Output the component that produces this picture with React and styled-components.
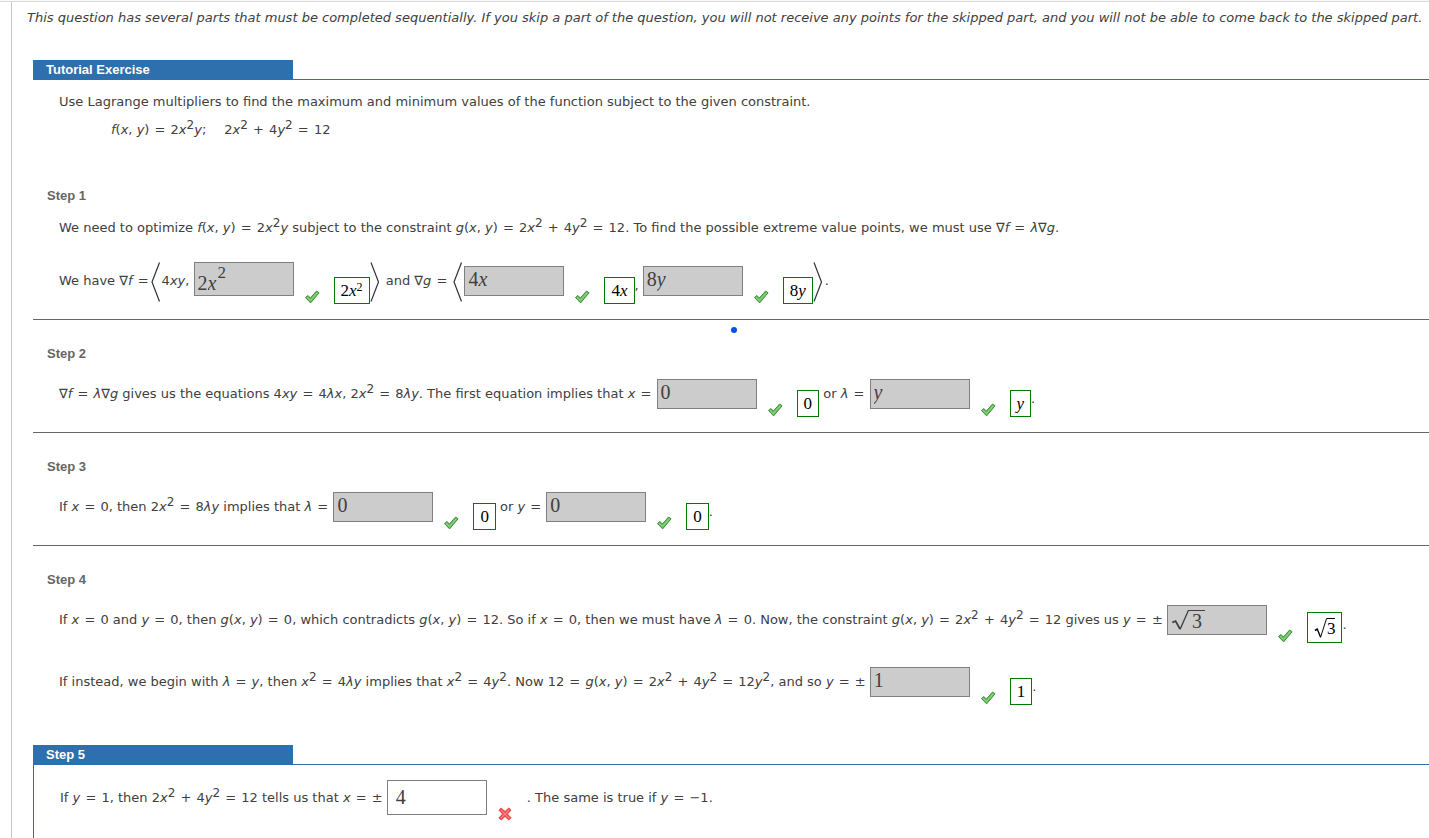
import React from "react";
import styled, { createGlobalStyle } from "styled-components";

const GlobalStyle = createGlobalStyle`
  * {
    box-sizing: border-box;
  }

  body {
    margin: 0;
    background: #fff;
    color: #404040;
    font-family: Verdana, "DejaVu Sans", sans-serif;
    font-size: 13px;
    line-height: 20px;
  }
`;

const Page = styled.main`
  min-height: 100vh;
  padding-top: 1px;
  background: #f8f8f8;
  overflow: hidden;
`;

const Question = styled.div`
  min-height: 100vh;
  border-top: 1px solid #dcdcdc;
  background: #fff;
  display: flex;
`;

const Gutter = styled.div`
  flex: none;
  width: 12px;
  border-right: 1px solid #c8c8c8;
`;

const Content = styled.div`
  flex: 1;
  min-width: 0;
  padding: 6px 0 0 21px;
  white-space: nowrap;
`;

const Notice = styled.p`
  margin: 0 0 32px -6px;
  font-style: italic;
`;

const Banner = styled.h2`
  margin: 0;
  border-bottom: 1px solid #2e6fad;
  font-size: 13px;
  font-family: Arial, "Liberation Sans", sans-serif;
  line-height: 19px;
  color: #fff;

  span {
    display: block;
    width: 260px;
    padding-left: 13px;
    background: #2e6fad;
  }
`;

const Intro = styled.div`
  padding: 12px 0 46px 26px;
`;

const Text = styled.p`
  margin: 0;
`;

const Formula = styled.p`
  margin: 8px 0 0 52px;

  span + span {
    margin-left: 18px;
  }
`;

const StepBox = styled.section`
  position: relative;
  padding: 0 0 ${(props) => (props.$last ? "0" : "15px")} 26px;
  border-bottom: ${(props) => (props.$last ? "none" : "1px solid #666")};
  margin-bottom: 24px;
`;

const StepTitle = styled.h3`
  margin: 0 0 ${(props) => (props.$tight ? "12px" : "15px")} -12px;
  font-family: Arial, "Liberation Sans", sans-serif;
  font-size: 13px;
  line-height: 20px;
  color: #666;
`;

const Row = styled.div`
  display: flex;
  align-items: flex-end;
  margin-top: ${(props) => (props.$spaced ? "24px" : "0")};
`;

const Words = styled.span`
  line-height: 30px;
  margin-bottom: 8px;
  white-space: pre;
`;

const Sup = styled.sup`
  font-size: 12px;
  line-height: 0;
  vertical-align: 5px;
`;

const Operator = styled.b`
  padding: 0 1px;
  font-weight: normal;
`;

const Field = styled.span`
  flex: none;
  display: flex;
  align-items: ${(props) => (props.$tall ? "flex-end" : "flex-start")};
  width: 100px;
  height: ${(props) => (props.$tall ? 34 : 30)}px;
  margin-bottom: 8px;
  padding-left: 3px;
  border: 1px solid #808080;
  background: #ccc;
`;

const OpenField = styled(Field)`
  height: 35px;
  margin-bottom: 6px;
  padding: 4px 0 0 8px;
  background: #fff;
`;

const RootField = styled(Field)`
  padding-top: 4px;
`;

const Slot = styled.input`
  width: ${(props) => props.$width || 80}px;
  height: 24px;
  padding: 0;
  border: none;
  outline: none;
  background: none;
  color: #404040;
  font-family: "Times New Roman", "Liberation Serif", serif;
  font-size: 20px;
  font-style: ${(props) => (props.$italic ? "italic" : "normal")};
`;

const PowerSlot = styled(Slot)`
  height: 20px;
  margin-bottom: 12px;
  font-size: 17px;
`;

const RootSlot = styled(Slot)`
  height: 21px;
  padding-left: 3px;
  border-top: 1px solid #404040;
`;

const Mark = styled.svg`
  flex: none;
  width: 16px;
  height: 16px;
  margin: 0 14px -1px 10px;
`;

const Key = styled.span`
  flex: none;
  padding: 2px 6px;
  border: 1px solid #007a00;
  color: #000;
  font-family: "Times New Roman", "Liberation Serif", serif;
  font-size: 17px;
  line-height: ${(props) => (props.$tall ? 25 : 21)}px;
`;

const Radical = styled.svg`
  width: ${(props) => props.$width}px;
  height: 21px;
  flex: none;
`;

const KeyRoot = styled.span`
  display: flex;
  padding: 3px 0 1px;

  span {
    line-height: 20px;
    border-top: 1px solid #000;
  }
`;

const Bracket = styled.svg`
  flex: none;
  width: 11px;
  height: 40px;
  margin: 0 1px 2px 0;
`;

const Stop = styled.span`
  margin-bottom: 8px;
  white-space: pre;
`;

const Dot = styled.span`
  position: absolute;
  left: 698px;
  bottom: -14px;
  width: 6px;
  height: 6px;
  border-radius: 50%;
  background: #0050f0;
`;

const Current = styled.section`
  margin-top: 40px;
`;

const CurrentBody = styled.div`
  min-height: 100px;
  padding: 15px 0 16px 26px;
  border-left: 1px solid #2e6fad;
`;

function Check() {
  return (
    <Mark viewBox="0 0 16 16" role="img" aria-label="Correct">
      <path d="M1.5 8.5 4 6.5l2.3 2.6L12.6 2l2.5 1.8L6.6 13.9Z" fill="#69bd62" stroke="#3f8f3d" />
      <path d="M3 8.3 6.4 11.5 13.5 3.6" fill="none" stroke="#97dc8e" />
    </Mark>
  );
}

function Cross() {
  return (
    <Mark viewBox="0 0 16 16" role="img" aria-label="Incorrect">
      <path
        d="M4.2 2 8 5.6 11.8 2 14 4.2 10.4 8l3.6 3.8-2.2 2.2L8 10.4 4.2 14 2 11.8 5.6 8 2 4.2Z"
        fill="#ff5a5a"
        stroke="#e23b40"
      />
      <path d="M4.2 4 12 12M12 4 4.2 12" stroke="#ff8585" />
    </Mark>
  );
}

function Angle({ right }) {
  return (
    <Bracket viewBox="0 0 11 40" aria-hidden="true">
      <path
        d={right ? "M1 0.5 8.5 20 1 39.5" : "M9.5 0.5 2 20 9.5 39.5"}
        fill="none"
        stroke="#333"
        strokeWidth="1.2"
      />
    </Bracket>
  );
}

function Root({ width, color }) {
  return (
    <Radical $width={width} viewBox="0 0 14 21" preserveAspectRatio="none" aria-hidden="true">
      <path d="M1 12.5 3.5 11 7 19" fill="none" stroke={color} strokeWidth="1.5" />
      <path d="M7 19.5 13.5 0.5H14" fill="none" stroke={color} />
    </Radical>
  );
}

// Letters become italic, ^n a superscript, = and + get room on both sides
function M({ children }) {
  return (
    <span>
      {children.split(/(\^\d|[a-zλ]+|[=+])/).map((part, i) => {
        if (/^\^/.test(part)) return <Sup key={i}>{part.slice(1)}</Sup>;
        if (/^[a-zλ]/.test(part)) return <i key={i}>{part}</i>;
        if (/^[=+]/.test(part)) return <Operator key={i}>{part}</Operator>;
        return part;
      })}
    </span>
  );
}

function Answer({ label, value, italic }) {
  return (
    <Field>
      <Slot aria-label={label} defaultValue={value} $italic={italic} readOnly />
    </Field>
  );
}

function Term({ label, factor, variable, power }) {
  return (
    <Field $tall={Boolean(power)}>
      <Slot aria-label={`${label}, factor`} defaultValue={factor} $width={10} readOnly />
      <Slot aria-label={`${label}, variable`} defaultValue={variable} $width={10} $italic readOnly />
      {power && (
        <PowerSlot aria-label={`${label}, power`} defaultValue={power} $width={12} readOnly />
      )}
    </Field>
  );
}

export default function App() {
  return (
    <>
      <GlobalStyle />
      <Page>
        <Question>
          <Gutter />
          <Content>
            <Notice>
              This question has several parts that must be completed sequentially. If you skip a
              part of the question, you will not receive any points for the skipped part, and you
              will not be able to come back to the skipped part.
            </Notice>

            <Banner>
              <span>Tutorial Exercise</span>
            </Banner>
            <Intro>
              <Text>
                Use Lagrange multipliers to find the maximum and minimum values of the function
                subject to the given constraint.
              </Text>
              <Formula>
                <M>f(x, y) = 2x^2y;</M>
                <M>2x^2 + 4y^2 = 12</M>
              </Formula>
            </Intro>

            <StepBox>
              <StepTitle $tight>Step 1</StepTitle>
              <Text>
                We need to optimize <M>f(x, y) = 2x^2y</M> subject to the constraint{" "}
                <M>g(x, y) = 2x^2 + 4y^2 = 12</M>. To find the possible extreme value points, we
                must use <M>∇f = λ∇g</M>.
              </Text>
              <Row $spaced>
                <Words>
                  We have <M>∇f =</M>
                </Words>
                <Angle />
                <Words>
                  <M>4xy, </M>
                </Words>
                <Term label="Second component of grad f" factor="2" variable="x" power="2" />
                <Check />
                <Key>
                  <M>2x^2</M>
                </Key>
                <Angle right />
                <Words>
                  {" "}
                  and <M>∇g = </M>
                </Words>
                <Angle />
                <Term label="First component of grad g" factor="4" variable="x" />
                <Check />
                <Key>
                  <M>4x</M>
                </Key>
                <Stop>, </Stop>
                <Term label="Second component of grad g" factor="8" variable="y" />
                <Check />
                <Key>
                  <M>8y</M>
                </Key>
                <Angle right />
                <Words>.</Words>
              </Row>
              <Dot />
            </StepBox>

            <StepBox>
              <StepTitle>Step 2</StepTitle>
              <Row>
                <Words>
                  <M>∇f = λ∇g</M> gives us the equations <M>4xy = 4λx, 2x^2 = 8λy</M>. The first
                  equation implies that <M>x = </M>
                </Words>
                <Answer label="x" value="0" />
                <Check />
                <Key>0</Key>
                <Words>
                  {" "}
                  or <M>λ = </M>
                </Words>
                <Answer label="lambda" value="y" italic />
                <Check />
                <Key>
                  <M>y</M>
                </Key>
                <Stop>.</Stop>
              </Row>
            </StepBox>

            <StepBox>
              <StepTitle>Step 3</StepTitle>
              <Row>
                <Words>
                  If <M>x = 0</M>, then <M>2x^2 = 8λy</M> implies that <M>λ = </M>
                </Words>
                <Answer label="lambda when x is 0" value="0" />
                <Check />
                <Key>0</Key>
                <Words>
                  {" "}
                  or <M>y = </M>
                </Words>
                <Answer label="y when x is 0" value="0" />
                <Check />
                <Key>0</Key>
                <Stop>.</Stop>
              </Row>
            </StepBox>

            <StepBox $last>
              <StepTitle>Step 4</StepTitle>
              <Row>
                <Words>
                  If <M>x = 0</M> and <M>y = 0</M>, then <M>g(x, y) = 0</M>, which contradicts{" "}
                  <M>g(x, y) = 12</M>. So if <M>x = 0</M>, then we must have <M>λ = 0</M>. Now, the
                  constraint <M>g(x, y) = 2x^2 + 4y^2 = 12</M> gives us <M>y = ± </M>
                </Words>
                <RootField>
                  <Root width={18} color="#404040" />
                  <RootSlot aria-label="y, under the root" defaultValue="3" $width={16} readOnly />
                </RootField>
                <Check />
                <Key $tall>
                  <KeyRoot>
                    <Root width={13} color="#000" />
                    <span>3</span>
                  </KeyRoot>
                </Key>
                <Stop>.</Stop>
              </Row>
              <Row $spaced>
                <Words>
                  If instead, we begin with <M>λ = y</M>, then <M>x^2 = 4λy</M> implies that{" "}
                  <M>x^2 = 4y^2</M>. Now <M>12 = g(x, y) = 2x^2 + 4y^2 = 12y^2</M>, and so{" "}
                  <M>y = ± </M>
                </Words>
                <Answer label="y" value="1" />
                <Check />
                <Key>1</Key>
                <Stop>.</Stop>
              </Row>
            </StepBox>

            <Current>
              <Banner>
                <span>Step 5</span>
              </Banner>
              <CurrentBody>
                <Row>
                  <Words>
                    If <M>y = 1</M>, then <M>2x^2 + 4y^2 = 12</M> tells us that <M>x = ± </M>
                  </Words>
                  <OpenField>
                    <Slot aria-label="x when y is 1" defaultValue="4" />
                  </OpenField>
                  <Cross />
                  <Words>
                    . The same is true if <M>y = −1</M>.
                  </Words>
                </Row>
              </CurrentBody>
            </Current>
          </Content>
        </Question>
      </Page>
    </>
  );
}
